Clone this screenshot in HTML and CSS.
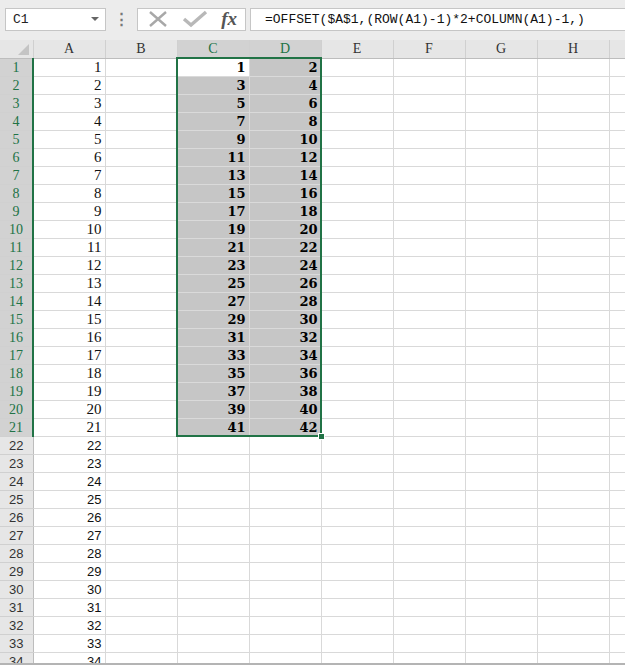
FILE: index.html
```html
<!DOCTYPE html>
<html>
  <head>
    <meta name="viewport" content="width=device-width, initial-scale=1.0">
    <title>Libro1</title>
    <link rel="stylesheet" href="styles.css">
  </head>
  <body>
    <div class="barra">
      <div class="nombre">
        <span>C1</span>
        <span class="flecha"></span>
      </div>
      <div class="puntos">⋮</div>
      <div class="botones">
        <svg width="22" height="18" viewBox="0 0 22 18" class="icono">
          <path d="M3 2 L19 16 M19 2 L3 16" stroke="#a8a8a8" stroke-width="2.4" fill="none"/>
        </svg>
        <svg width="26" height="18" viewBox="0 0 26 18" class="icono">
          <path d="M2 9 L9 15 L24 2" stroke="#b8b8b8" stroke-width="3.4" fill="none"/>
        </svg>
        <span class="fx">fx</span>
      </div>
      <div class="formula">=OFFSET($A$1,(ROW(A1)-1)*2+COLUMN(A1)-1,)</div>
    </div>
    <div class="hoja">
      <table id="tabla">
        <colgroup>
          <col class="c-num">
          <col class="c-col"><col class="c-col"><col class="c-col"><col class="c-col">
          <col class="c-col"><col class="c-col"><col class="c-col"><col class="c-col"><col class="c-col">
        </colgroup>
        <thead>
          <tr>
            <th class="esquina"><span class="triangulo"></span></th>
            <th>A</th><th>B</th><th class="marcada">C</th><th class="marcada">D</th>
            <th>E</th><th>F</th><th>G</th><th>H</th><th></th>
          </tr>
        </thead>
        <tbody id="filas"></tbody>
      </table>
      <div class="seleccion"><span class="asa"></span></div>
    </div>
    <script>
      const filas = document.getElementById("filas");
      for (let r = 1; r <= 34; r++) {
        const tr = document.createElement("tr");
        const enRango = r <= 21;
        let html = `<th class="${enRango ? "fila marcada" : "fila"}">${r}</th>`;
        html += `<td class="${enRango ? "serif" : "sans"}">${r}</td>`;
        html += "<td></td>";
        if (enRango) {
          html += `<td class="${r === 1 ? "dato activa" : "dato"}">${r * 2 - 1}</td>`;
          html += `<td class="dato">${r * 2}</td>`;
        } else {
          html += "<td></td><td></td>";
        }
        html += "<td></td><td></td><td></td><td></td><td></td>";
        tr.innerHTML = html;
        filas.appendChild(tr);
      }
    </script>
  </body>
</html>
```

FILE: styles.css
```css
body {
  margin: 0;
  width: 625px;
  height: 665px;
  overflow: hidden;
  background: #fff;
  font-family: "Liberation Sans", Arial, sans-serif;
}
.barra {
  display: flex;
  align-items: center;
  height: 40px;
  padding-bottom: 2px;
  box-sizing: border-box;
  background: #ececec;
}
.nombre {
  display: flex;
  align-items: center;
  justify-content: space-between;
  margin-left: 5px;
  width: 101px;
  height: 23px;
  padding: 0 6px 0 7px;
  box-sizing: border-box;
  background: #fff;
  border: 1px solid #c6c6c6;
  font-family: "Liberation Mono", monospace;
  font-size: 13px;
  color: #222;
}
.flecha {
  width: 0;
  height: 0;
  border-left: 4px solid transparent;
  border-right: 4px solid transparent;
  border-top: 4px solid #666;
}
.puntos {
  width: 31px;
  text-align: center;
  color: #777;
  font-size: 15px;
  font-weight: bold;
}
.botones {
  display: flex;
  align-items: center;
  justify-content: space-between;
  width: 109px;
  height: 23px;
  padding: 0 8px 0 9px;
  box-sizing: border-box;
  background: #fff;
  border: 1px solid #c6c6c6;
}
.fx {
  font-family: "Liberation Serif", serif;
  font-style: italic;
  font-weight: bold;
  font-size: 19px;
  color: #555;
  line-height: 20px;
}
.formula {
  flex: 1;
  margin-left: 4px;
  height: 23px;
  padding-left: 14px;
  box-sizing: border-box;
  background: #fff;
  border: 1px solid #c6c6c6;
  border-right: none;
  font-family: "Liberation Mono", monospace;
  font-size: 13px;
  line-height: 21px;
  color: #111;
  white-space: nowrap;
  overflow: hidden;
}
.hoja {
  position: relative;
  height: 623px;
  overflow: hidden;
  border-bottom: 2px solid #b4b4b4;
}
table {
  border-collapse: collapse;
  table-layout: fixed;
  width: 681px;
}
.c-num {
  width: 33px;
}
.c-col {
  width: 72px;
}
th, td {
  height: 17px;
  padding: 0 3px 0 0;
  border: 1px solid #d9d9d9;
  font-size: 13px;
  line-height: 17px;
  white-space: nowrap;
  overflow: hidden;
}
thead th {
  height: 17px;
  padding: 0;
  background: #e6e6e6;
  border-top: none;
  border-color: #d0d0d0;
  border-bottom: 1px solid #bdbdbd;
  font-family: "Liberation Serif", serif;
  font-weight: normal;
  font-size: 14px;
  color: #333;
  text-align: center;
}
thead th.marcada {
  background: #d2d2d2;
  color: #217346;
  border-bottom: 2px solid #217346;
}
.esquina {
  position: relative;
  border-left: none;
}
.triangulo {
  position: absolute;
  right: 4px;
  bottom: 3px;
  width: 0;
  height: 0;
  border-left: 11px solid transparent;
  border-bottom: 11px solid #c4c4c4;
}
th.fila {
  padding: 0;
  background: #e6e6e6;
  border-left: none;
  border-color: #d0d0d0;
  border-right: 1px solid #bdbdbd;
  font-family: "Liberation Sans", Arial, sans-serif;
  font-weight: normal;
  color: #333;
  text-align: center;
}
th.fila.marcada {
  background: #d2d2d2;
  color: #217346;
  font-family: "Liberation Serif", serif;
  font-size: 14px;
  border-right: 2px solid #217346;
}
td {
  text-align: right;
  color: #111;
}
td.serif {
  font-family: "Liberation Serif", serif;
  font-size: 15px;
}
td.dato {
  background: #c6c6c6;
  border-color: #dadada;
  font-family: "DejaVu Serif", serif;
  font-weight: bold;
  font-size: 13px;
  color: #000;
}
td.dato.activa {
  background: #fff;
}
.seleccion {
  position: absolute;
  left: 176px;
  top: 17px;
  width: 146px;
  height: 380px;
  box-sizing: border-box;
  border: 2px solid #217346;
  pointer-events: none;
}
.asa {
  position: absolute;
  right: -5px;
  bottom: -5px;
  width: 5px;
  height: 5px;
  background: #217346;
  border: 1px solid #fff;
}
```
